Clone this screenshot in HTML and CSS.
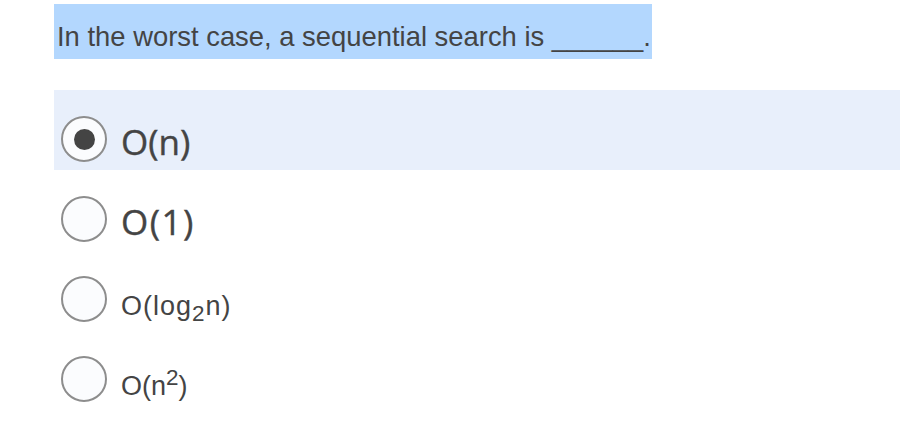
FILE: index.html
```html
<!DOCTYPE html>
<html>
<head>
<meta charset="utf-8">
<link rel="stylesheet" href="styles.css">
</head>
<body>
<div class="page">
  <div class="question"><span class="qtext">In the worst case, a sequential search is ______.</span></div>
  <div class="options">
    <div class="opt selected">
      <span class="radio"><span class="dot"></span></span>
      <span class="label big">O(n)</span>
    </div>
    <div class="opt">
      <span class="radio"></span>
      <span class="label big one">O(1)</span>
    </div>
    <div class="opt">
      <span class="radio"></span>
      <span class="label small log">O(log<sub>2</sub>n)</span>
    </div>
    <div class="opt">
      <span class="radio"></span>
      <span class="label small">O(n<sup>2</sup>)</span>
    </div>
  </div>
</div>
</body>
</html>
```
FILE: styles.css
```css
html, body {
  margin: 0;
  padding: 0;
  background: #ffffff;
}
.page {
  padding: 4px 0 0 54px;
  color: #444444;
}
.question {
  display: inline-block;
  background: #b3d7fe;
  padding: 17px 1px 7px 3px;
  font-family: "Liberation Sans", Arial, sans-serif;
  font-size: 27.4px;
  line-height: 31px;
}
.options {
  margin-top: 31px;
}
.opt {
  height: 80px;
  box-sizing: border-box;
  padding: 26px 0 0 7px;
  display: flex;
  align-items: flex-start;
}
.opt.selected {
  background: #e8effb;
}
.radio {
  width: 46px;
  height: 46px;
  box-sizing: border-box;
  border: 2px solid #8d8d8d;
  border-radius: 50%;
  background: #fbfcfe;
  display: flex;
  align-items: center;
  justify-content: center;
  flex: none;
}
.dot {
  width: 21px;
  height: 21px;
  border-radius: 50%;
  background: #444444;
}
.label {
  margin-left: 14px;
  line-height: 46px;
  white-space: nowrap;
}
.label.big {
  font-family: "Open Sans", sans-serif;
  font-size: 35px;
  margin-top: 3px;
  -webkit-text-stroke: 0.4px #444444;
}
.label.one {
  letter-spacing: 1.5px;
}
.label.small {
  font-family: "Liberation Sans", Arial, sans-serif;
  font-size: 27px;
  margin-top: 7px;
}
.label.log {
  letter-spacing: 1px;
}
.label sub, .label sup {
  line-height: 0;
}
```
